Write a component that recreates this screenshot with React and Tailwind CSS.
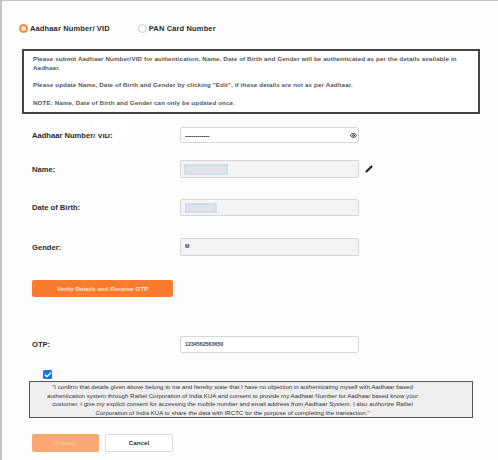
import React from "react";
import { Eye, Pencil, Check } from "lucide-react";

const font = "font-['Liberation_Sans',Arial,sans-serif]";

function Row({ label, className = "", children, aside }) {
  return (
    <div className={"flex items-center pl-[30px] " + className}>
      <label className="w-[148px] shrink-0 text-[7.6px] leading-[11px] font-bold text-[#2b2b2b]">{label}</label>
      {children}
      {aside}
    </div>
  );
}

function Field({ disabled, children, height = "h-[18px]" }) {
  return (
    <div
      className={
        "relative flex w-[179px] items-center rounded-[2px] border border-[#d4d7da] px-[4px] text-[5.3px] font-bold text-[#33406b] " +
        height +
        (disabled ? " bg-[#f4f4f5]" : " bg-white")
      }
    >
      {children}
    </div>
  );
}

function Blur({ className }) {
  return <div className={"border-2 border-[#cddfee] bg-[#e0e3e6] " + className} />;
}

export default function App() {
  return (
    <div className={font + " relative h-[460px] w-[498px] overflow-hidden border-t border-l-2 border-[#c4c4c4] bg-[#fdfdfd]"}>
      {/* radio choice */}
      <div className="flex h-[33px] items-center pt-[22px] pl-[17px] text-[7.5px] leading-[11px] font-bold tracking-[0.14px] text-[#2b2b2b]">
        <span className="h-[9px] w-[9px] rounded-full border-[2.5px] border-[#f58a42] bg-[#fbe3d0]" />
        <span className="ml-[2px]">Aadhaar Number/ VID</span>
        <span className="ml-[28px] h-[9px] w-[9px] rounded-full border border-[#c6c6c6] bg-white" />
        <span className="ml-[2px]">PAN Card Number</span>
      </div>

      {/* notice */}
      <div className="mt-[15px] ml-[20px] h-[65px] w-[458px] border-2 border-[#444] bg-white pt-[3px] pl-[9px] pr-[8px] text-[6.2px] font-bold leading-[9px] tracking-[0.13px] text-[#555]">
        <p>Please submit Aadhaar Number/VID for authentication. Name, Date of Birth and Gender will be authenticated as per the details available in Aadhaar.</p>
        <p className="mt-[8px]">Please update Name, Date of Birth and Gender by clicking "Edit", if these details are not as per Aadhaar.</p>
        <p className="mt-[9px]">NOTE: Name, Date of Birth and Gender can only be updated once.</p>
      </div>

      <Row label="Aadhaar Number/ VID:" className="mt-[13px]">
        <Field height="h-[16px]">
          <span className="text-[7px] leading-none tracking-[-0.3px] text-[#444]">------------</span>
          <Eye className="absolute right-[1px] h-[7px] w-[7px] text-[#333]" strokeWidth={3} />
        </Field>
      </Row>
      {/* white smudge in the original screenshot */}
      <div className="absolute top-[121px] left-[92px] h-[12px] w-[40px] bg-white" />

      <Row
        label="Name:"
        className="mt-[17px]"
        aside={<Pencil className="ml-[6px] h-[8px] w-[8px] text-[#222]" fill="#222" strokeWidth={1.5} />}
      >
        <Field disabled>
          <Blur className="-ml-[1px] h-[11px] w-[44px]" />
        </Field>
      </Row>

      <Row label="Date of Birth:" className="mt-[21px]">
        <Field disabled height="h-[17px]">
          <Blur className="h-[10px] w-[32px]" />
        </Field>
      </Row>

      <Row label="Gender:" className="mt-[22px]">
        <Field disabled>M</Field>
      </Row>

      <div className="mt-[24px] pl-[30px]">
        <button className="block h-[17px] w-[141px] rounded-[2px] bg-[#f97b2e] text-[6.2px] font-bold text-[#fde6d6]">
          Verify Details and Receive OTP
        </button>
      </div>

      <Row label="OTP:" className="mt-[39px]">
        <Field height="h-[17px]">1234562563650</Field>
      </Row>

      {/* consent */}
      <div className="mt-[17px] ml-[41px] flex h-[9px] w-[9px] items-center justify-center rounded-[1.5px] bg-[#1a73e8]">
        <Check className="h-[8px] w-[8px] text-white" strokeWidth={4} />
      </div>
      <div className="mt-[2px] ml-[27px] h-[37px] w-[444px] border border-[#555] bg-[#efefef] pt-[1px] pl-[16px] pr-[53px] text-center text-[6.1px] leading-[8.7px] text-[#333]">
        "I confirm that details given above belong to me and hereby state that I have no objection in authenticating myself with Aadhaar based authentication system through Railtel Corporation of India KUA and consent to provide my Aadhaar Number for Aadhaar based know your customer. I give my explicit consent for accessing the mobile number and email address from Aadhaar System. I also authorize Railtel Corporation of India KUA to share the data with IRCTC for the purpose of completing the transaction."
      </div>

      {/* actions */}
      <div className="mt-[16px] flex gap-[6px] pl-[30px]">
        <button className="h-[18px] w-[67px] rounded-[2px] bg-[#fba772] text-[6.2px] font-bold text-[#fcc6a3]">Submit</button>
        <button className="h-[18px] w-[68px] rounded-[2px] border border-[#d9d9d9] bg-white text-[6.2px] font-bold text-[#333]">Cancel</button>
      </div>
    </div>
  );
}
